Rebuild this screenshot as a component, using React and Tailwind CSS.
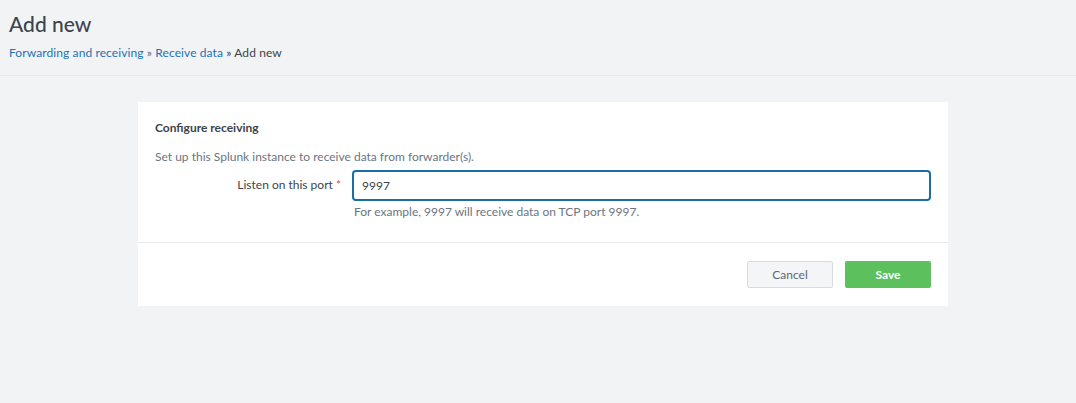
import React, { useState } from "react";

export default function App() {
  const [port, setPort] = useState("9997");

  return (
    <div className="min-h-[403px] bg-[#f2f3f5] text-[#3c444d]" style={{ fontFamily: "Lato, 'Open Sans', sans-serif" }}>
      <div className="h-[76px] border-b border-[#e6e8eb] px-[9px] pt-[11px]">
        <h1 className="text-[21px] leading-[26px] font-medium text-[#3c444d]">Add new</h1>
        <div className="mt-[8px] text-[12px] leading-[16px] tracking-[0.1px]">
          <a href="#" className="text-[#1a72b8]">Forwarding and receiving</a>
          <span className="text-[#5c6773]"> » </span>
          <a href="#" className="text-[#1a72b8]">Receive data</a>
          <span className="text-[#3c444d]"> » Add new</span>
        </div>
      </div>

      <div className="ml-[138px] mt-[26px] w-[810px] bg-white">
        <div className="px-[17px] pt-[18px] pb-[22px]">
          <h2 className="text-[12px] leading-[16px] font-bold text-[#3c444d]">Configure receiving</h2>
          <p className="mt-[13px] text-[12px] leading-[16px] text-[#6b7580]">
            Set up this Splunk instance to receive data from forwarder(s).
          </p>
          <div className="mt-[5px] flex items-start">
            <label className="w-[197px] shrink-0 pr-[11px] pt-[7px] text-right text-[12px] leading-[16px] text-[#3c444d]">
              Listen on this port <span className="text-[#d6563c]">*</span>
            </label>
            <div className="flex-1">
              <input
                value={port}
                onChange={(e) => setPort(e.target.value)}
                className="h-[31px] w-[579px] rounded-[4px] border-2 border-[#1a6ea8] bg-white px-[8px] text-[12px] text-[#3c444d] outline-none"
              />
              <p className="mt-[3px] pl-[2px] text-[12px] leading-[16px] text-[#6b7580]">
                For example, 9997 will receive data on TCP port 9997.
              </p>
            </div>
          </div>
        </div>
        <div className="flex justify-end gap-[12px] border-t border-[#e9ebee] px-[17px] pt-[18px] pb-[18px]">
          <button className="h-[27px] w-[86px] rounded-[2px] border border-[#d7dbe0] bg-[#f4f5f7] text-[12px] text-[#5c6773]">
            Cancel
          </button>
          <button className="h-[27px] w-[86px] rounded-[2px] bg-[#5cc05c] text-[12px] font-bold text-white">
            Save
          </button>
        </div>
      </div>
    </div>
  );
}
